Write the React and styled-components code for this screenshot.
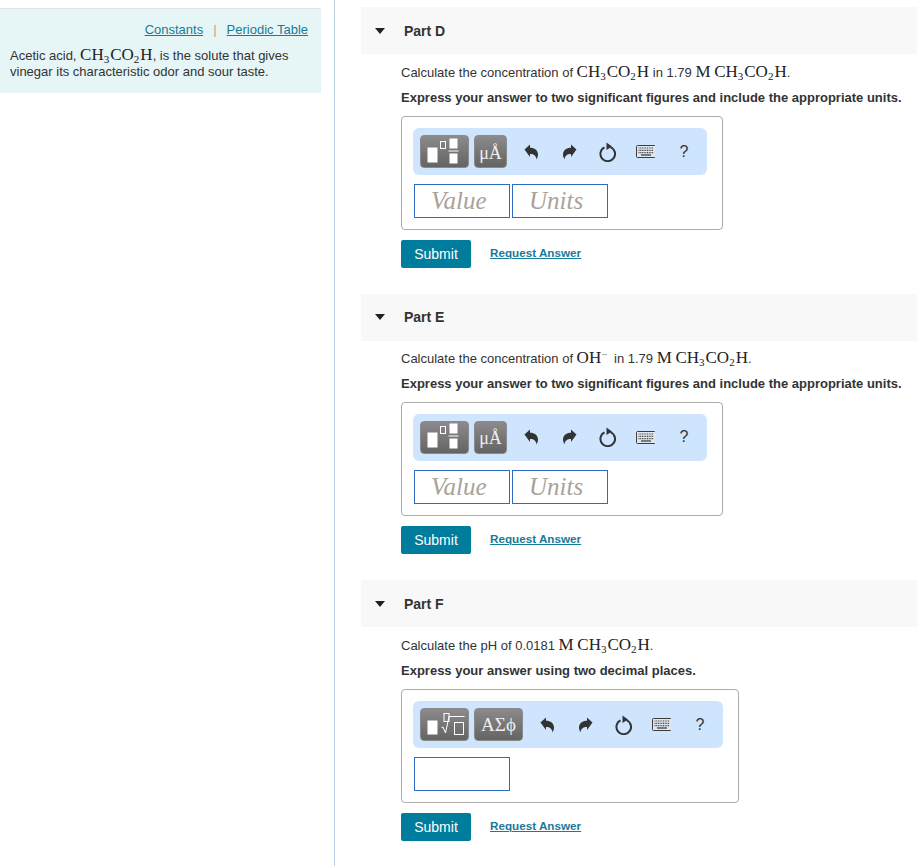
import React from 'react'
import styled, { createGlobalStyle } from 'styled-components'

const Global = createGlobalStyle`
  html, body {
    margin: 0;
    padding: 0;
    background: #fff;
  }
  body {
    font-family: "Liberation Sans", Arial, sans-serif;
    color: #333;
  }
`

const Math = ({ children }) => <MathText>{children}</MathText>

const Acid = () => (
  <Math>
    CH<sub>3</sub>CO<sub>2</sub>H
  </Math>
)

const TemplateIcon = () => (
  <svg width="46" height="32" viewBox="0 0 46 32">
    <rect x="5.500" y="11.500" width="10" height="15" fill="#fff" />
    <rect x="18.500" y="5.500" width="5" height="7" fill="none" stroke="#fff" />
    <rect x="27.500" y="2.500" width="8" height="10" fill="#fff" />
    <rect x="26.500" y="14.500" width="10" height="1" fill="#fff" />
    <rect x="27.500" y="17.500" width="8" height="10" fill="#fff" />
  </svg>
)

const RootIcon = () => (
  <svg width="46" height="32" viewBox="0 0 46 32">
    <rect x="5.500" y="11.500" width="10" height="14" fill="#fff" />
    <rect x="22" y="4.500" width="5" height="8" fill="none" stroke="#fff" />
    <path d="M19.500 18.500 21 18l2.500 6L27 7.500h15.500" fill="none" stroke="#fff" strokeWidth="1" />
    <rect x="32.500" y="13.500" width="9" height="12" fill="none" stroke="#fff" />
  </svg>
)

const UndoIcon = () => (
  <svg width="15" height="16" viewBox="0 0 15 16">
    <path d="M0.500 5.500 6 0.500v3.200c4.500 0 8 2.500 8 6.800 0 2-.8 3.500-1.500 5-.2-3.500-2.500-5.500-6.500-5.500v3z" fill="#333" />
  </svg>
)

const RedoIcon = () => (
  <svg width="15" height="16" viewBox="0 0 15 16">
    <path d="M14.500 5.500 9 0.500v3.200c-4.500 0-8 2.500-8 6.800 0 2 .8 3.500 1.500 5 .2-3.500 2.500-5.500 6.500-5.500v3z" fill="#333" />
  </svg>
)

const ResetIcon = () => (
  <svg width="18" height="20" viewBox="-1 0 18 20">
    <path d="M5.500 5.300a7.300 7.300 0 1 0 6 -.2" fill="none" stroke="#333" strokeWidth="2" />
    <path d="M7.500 0.500l5.500 4-5.500 3.500z" fill="#333" />
  </svg>
)

const KeyboardIcon = () => (
  <svg width="20" height="13" viewBox="-1 0 20 13">
    <rect x="0.500" y="0.500" width="19" height="12" rx="1" fill="#dfe7ef" stroke="#3c3c3c" />
    <path d="M2.500 3h15M2.500 5.300h15M2.500 7.600h15" stroke="#444" strokeWidth="1.200" strokeDasharray="1 .7" />
    <path d="M5 10h10" stroke="#333" strokeWidth="1.200" />
  </svg>
)

const Tools = ({ wide }) => (
  <Toolbar $wide={wide}>
    <PaletteButton $width={49}>{wide ? <RootIcon /> : <TemplateIcon />}</PaletteButton>
    {wide ? (
      <PaletteButton $width={49} $label>AΣϕ</PaletteButton>
    ) : (
      <PaletteButton $width={33} $label $small>μÅ</PaletteButton>
    )}
    <ToolIcons>
      <ToolSlot><UndoIcon /></ToolSlot>
      <ToolSlot><RedoIcon /></ToolSlot>
      <ToolSlot><ResetIcon /></ToolSlot>
      <ToolSlot><KeyboardIcon /></ToolSlot>
      <ToolSlot $help>?</ToolSlot>
    </ToolIcons>
  </Toolbar>
)

const Part = ({ title, question, instruction, wide, tight }) => (
  <PartBlock>
    <PartHeader>
      <Caret />
      <PartTitle>{title}</PartTitle>
    </PartHeader>
    <PartBody $top={tight ? 6 : 7}>
      <Question>{question}</Question>
      <Instruction>{instruction}</Instruction>
      <AnswerBox $wide={wide}>
        <Tools wide={wide} />
        <Inputs>
          {wide ? (
            <Field />
          ) : (
            <>
              <Field>Value</Field>
              <Field>Units</Field>
            </>
          )}
        </Inputs>
      </AnswerBox>
      <Actions>
        <Submit>Submit</Submit>
        <RequestLink href="#">Request Answer</RequestLink>
      </Actions>
    </PartBody>
  </PartBlock>
)

const App = () => {
  return (
    <Page>
      <Global />
      <Side>
        <Info>
          <InfoLinks>
            <InfoLink href="#">Constants</InfoLink>
            <Sep>|</Sep>
            <InfoLink href="#">Periodic Table</InfoLink>
          </InfoLinks>
          <InfoText>
            Acetic acid, <Acid />, is the solute that gives vinegar its characteristic odor and sour taste.
          </InfoText>
        </Info>
      </Side>
      <Main>
        <Part
          title="Part D"
          question={<>Calculate the concentration of <Acid /> in 1.79 <Math>M</Math> <Acid />.</>}
          instruction="Express your answer to two significant figures and include the appropriate units."
        />
        <Part
          tight
          title="Part E"
          question={<>Calculate the concentration of <Math>OH<sup>−</sup></Math> in 1.79 <Math>M</Math> <Acid />.</>}
          instruction="Express your answer to two significant figures and include the appropriate units."
        />
        <Part
          wide
          title="Part F"
          question={<>Calculate the pH of 0.0181 <Math>M</Math> <Acid />.</>}
          instruction="Express your answer using two decimal places."
        />
      </Main>
    </Page>
  )
}

const Page = styled.div`
  display: flex;
  width: 917px;
  height: 866px;
  overflow: hidden;
`
const Side = styled.div`
  width: 335px;
  height: 100%;
  padding-top: 8px;
  box-sizing: border-box;
  border-right: 1px solid #b9cfe4;
  flex-shrink: 0;
`
const Info = styled.div`
  width: 321px;
  height: 85px;
  box-sizing: border-box;
  background: #e6f5f6;
  border-top: 1px solid #dde3e6;
  padding: 12px 13px 0 10px;
`
const InfoLinks = styled.div`
  display: flex;
  justify-content: flex-end;
  align-items: center;
  gap: 10px;
  font-size: 13px;
  line-height: 17px;
`
const InfoLink = styled.a`
  color: #1a7a9a;
  text-decoration: underline;
`
const Sep = styled.span`
  color: #b5a78f;
  font-size: 13px;
`
const InfoText = styled.div`
  margin-top: 9px;
  font-size: 13px;
  line-height: 16px;
  color: #333;
  width: 290px;
`
const MathText = styled.span`
  font-family: "Liberation Serif", "DejaVu Serif", serif;
  font-size: 17px;
  line-height: 16px;
  color: #222;
  & sub {
    font-size: 11px;
    line-height: 0;
    vertical-align: -3px;
    margin-right: 1px;
  }
  & sup {
    font-size: 11px;
    line-height: 0;
    vertical-align: 5px;
    margin-right: 3px;
    color: #777;
  }
`
const Main = styled.div`
  flex: 1;
  padding-top: 7px;
  padding-left: 26px;
  min-width: 0;
`
const PartBlock = styled.section`
  height: 286.500px;
`
const PartHeader = styled.div`
  display: flex;
  align-items: center;
  height: 47px;
  background: #f8f8f8;
  padding-left: 14px;
`
const Caret = styled.span`
  width: 0;
  height: 0;
  border-left: 5.500px solid transparent;
  border-right: 5.500px solid transparent;
  border-top: 6px solid #222;
`
const PartTitle = styled.h3`
  margin: 0 0 0 19px;
  font-size: 14px;
  font-weight: 700;
  color: #333;
`
const PartBody = styled.div`
  padding: ${(props) => props.$top}px 0 0 40px;
`
const Question = styled.div`
  font-size: 13px;
  line-height: 24px;
  height: 22px;
  color: #333;
`
const Instruction = styled.div`
  margin-top: 6px;
  font-size: 13px;
  line-height: 17px;
  font-weight: 700;
  color: #333;
`
const AnswerBox = styled.div`
  margin-top: 10px;
  width: ${(props) => (props.$wide ? 338 : 322)}px;
  height: 114px;
  box-sizing: border-box;
  border: 1px solid #aaa;
  border-radius: 4px;
  padding: 11px;
`
const Toolbar = styled.div`
  display: flex;
  align-items: center;
  gap: 5px;
  width: ${(props) => (props.$wide ? 310 : 294)}px;
  height: 47px;
  box-sizing: border-box;
  padding: 0 0 0 7px;
  background: #cfe5fd;
  border-radius: 6px;
`
const PaletteButton = styled.div`
  display: flex;
  align-items: center;
  justify-content: center;
  width: ${(props) => props.$width}px;
  height: 33px;
  box-sizing: border-box;
  border-radius: 4px;
  border: 1px solid #8a8a8a;
  background: linear-gradient(#8c8a8c, #646464);
  color: #eee;
  font-family: "Liberation Serif", serif;
  font-size: ${(props) => (props.$small ? 18 : 19)}px;
  padding-top: ${(props) => (props.$small ? 3 : 0)}px;
  flex-shrink: 0;
`
const ToolIcons = styled.div`
  display: flex;
  align-items: center;
  flex: 1;
`
const ToolSlot = styled.div`
  display: flex;
  align-items: center;
  justify-content: center;
  width: 38px;
  height: 24px;
  box-sizing: border-box;
  padding-left: ${(props) => (props.$help ? 2 : 0)}px;
  color: #333;
  font-size: ${(props) => (props.$help ? 16 : 14)}px;
`
const Inputs = styled.div`
  display: flex;
  gap: 2px;
  margin: 9px 0 0 1px;
`
const Field = styled.div`
  width: 96px;
  height: 34px;
  box-sizing: border-box;
  border: 1px solid #2e6bc6;
  padding-left: 16px;
  font-family: "Liberation Serif", serif;
  font-style: italic;
  font-size: 25px;
  line-height: 32px;
  color: #aaa299;
`
const Actions = styled.div`
  display: flex;
  align-items: center;
  margin-top: 10px;
`
const Submit = styled.button`
  width: 70px;
  height: 28px;
  border: 0;
  border-radius: 2px;
  background: #007c9c;
  color: #fff;
  font-family: "Liberation Sans", Arial, sans-serif;
  font-size: 14px;
  padding: 0;
`
const RequestLink = styled.a`
  margin-left: 19px;
  margin-top: -3px;
  font-size: 11.700px;
  font-weight: 700;
  color: #1a7a9a;
  text-decoration: underline;
`

export default App
